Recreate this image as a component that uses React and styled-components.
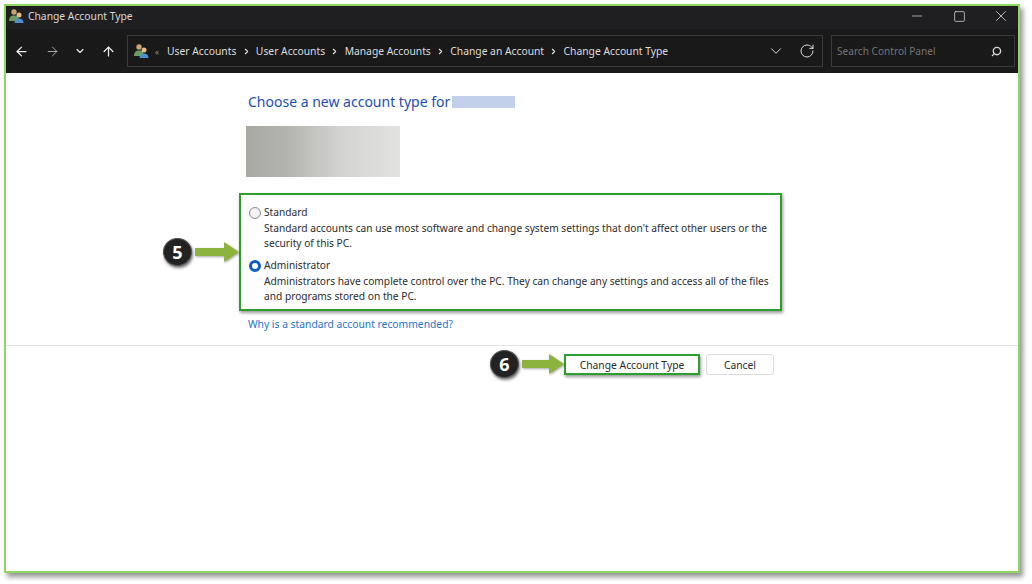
import React from 'react'
import styled, { createGlobalStyle } from 'styled-components'
import { ArrowLeft, ArrowRight, ArrowUp, ChevronDown, ChevronRight, RotateCw, Search, Minus, Square, X } from 'lucide-react'

const GlobalStyle = createGlobalStyle`
  html, body {
    margin: 0;
    padding: 0;
    background: #fff;
    font-family: "Noto Sans", "Open Sans", "Liberation Sans", sans-serif;
  }
`

const Page = styled.div`
  width: 1032px;
  height: 584px;
  padding: 4px 0 0 4px;
  box-sizing: border-box;
  overflow: hidden;
`

const Frame = styled.div`
  width: 1016px;
  height: 569px;
  box-sizing: border-box;
  border: 2px solid #90d75f;
  box-shadow: 3px 4px 5px rgba(0, 0, 0, 0.42);
  background: #fff;
  display: flex;
  flex-direction: column;
`

const TitleBar = styled.div`
  height: 20px;
  flex: none;
  background: #1f1e20;
  display: flex;
  align-items: center;
  gap: 8px;
  padding: 0 0 0 2px;
  color: #d8d8d8;
  font-size: 10.3px;
`

const TitleText = styled.span`
  margin-left: -5px;
  flex: 1;
`

const WindowButton = styled.div`
  width: 34px;
  display: flex;
  justify-content: center;
  color: #d4d4d4;
`

const NavBar = styled.div`
  height: 47px;
  flex: none;
  background: linear-gradient(#1f1e20 0, #1f1e20 3px, #1a191a 3px);
  display: flex;
  align-items: center;
  padding: 3px 0 0 0;
  box-sizing: border-box;
`

const NavButton = styled.div`
  width: ${props => props.$w}px;
  display: flex;
  justify-content: center;
  color: ${props => props.$dim ? '#b0b0b0' : '#f0f0f0'};
`

const AddressBox = styled.div`
  width: 696px;
  height: 32px;
  margin-left: 2px;
  box-sizing: border-box;
  border: 1px solid #3a3a3a;
  background: #191919;
  display: flex;
  align-items: center;
  padding-left: 5px;
  color: #dcdcdc;
  font-size: 10.3px;
`

const Crumb = styled.span`
  white-space: nowrap;
`

const CrumbSep = styled.span`
  width: 19.5px;
  display: flex;
  justify-content: center;
  color: #e0e0e0;
`

const Overflow = styled.span`
  color: #8a8a8a;
  font-size: 8px;
  margin: 0 8px 0 5px;
`

const AddressTools = styled.div`
  margin-left: auto;
  display: flex;
  align-items: center;
  gap: 14px;
  padding-right: 7px;
`

const SearchBox = styled.div`
  width: 184px;
  height: 32px;
  margin-left: 8px;
  box-sizing: border-box;
  border: 1px solid #3a3a3a;
  background: #191919;
  display: flex;
  align-items: center;
  justify-content: space-between;
  padding: 0 12px 0 5px;
  color: #747474;
  font-size: 10.1px;
`

const FlippedSearch = styled(Search)`
  transform: scaleX(-1);
  color: #d8d8d8;
`

const Content = styled.div`
  flex: 1;
  display: flex;
  flex-direction: column;
  position: relative;
`

const Main = styled.div`
  padding: 19px 0 0 242px;
  display: flex;
  flex-direction: column;
  align-items: flex-start;
`

const Heading = styled.div`
  display: flex;
  align-items: center;
  color: #1d4fb0;
  font-size: 14px;
  line-height: 20px;
`

const BlurredName = styled.span`
  width: 63px;
  height: 12px;
  margin-left: 2px;
  background: #c2d0ec;
`

const BlurredPicture = styled.div`
  width: 154px;
  height: 51px;
  margin: 14px 0 0 -2px;
  background: linear-gradient(90deg, #a8a9a3 0%, #b2b3ae 25%, #d2d3d0 60%, #e2e2e1 100%);
`

const Options = styled.div`
  width: 543px;
  height: 118px;
  margin: 16px 0 0 -9px;
  padding: 10px 0 0 8px;
  box-sizing: border-box;
  border: 2px solid #2ca02c;
  box-shadow: 1px 2px 3px rgba(0, 0, 0, 0.4);
`

const Option = styled.div`
  display: grid;
  grid-template-columns: 15px 1fr;
  font-size: 10.2px;
  line-height: 15.6px;
  color: #2b2b2b;
  margin-bottom: 6.3px;
`

const Radio = styled.span`
  width: 12px;
  height: 12px;
  margin-top: 2px;
  box-sizing: border-box;
  border-radius: 50%;
  background: ${props => props.$checked ? '#fff' : '#f2f2f2'};
  border: ${props => props.$checked ? '3.5px solid #0f5cc0' : '1px solid #8a8a8a'};
`

const OptionText = styled.div`
  grid-column: 2;
  width: 516px;
  white-space: pre-line;
`

const HelpLink = styled.a`
  margin-top: 6px;
  color: #1f74c8;
  font-size: 10.3px;
  line-height: 15px;
`

const Divider = styled.div`
  height: 1px;
  margin-top: 13px;
  background: #e2e2e2;
`

const Actions = styled.div`
  display: flex;
  gap: 6px;
  padding: 8px 0 0 558px;
`

const Button = styled.button`
  height: 21px;
  width: ${props => props.$w}px;
  box-sizing: border-box;
  padding: 0;
  background: #fff;
  color: #2b2b2b;
  font-family: inherit;
  font-size: 10.3px;
  border: ${props => props.$marked ? '2px solid #2ca02c' : '1px solid #dcdcdc'};
  border-radius: ${props => props.$marked ? '0' : '3px'};
  box-shadow: ${props => props.$marked ? '1px 2px 3px rgba(0, 0, 0, 0.4)' : 'none'};
`

const Callout = styled.div`
  position: absolute;
  left: ${props => props.$x}px;
  top: ${props => props.$y}px;
  display: flex;
  align-items: center;
  gap: 3px;
`

const Badge = styled.div`
  width: 29px;
  height: 28px;
  box-sizing: border-box;
  border-radius: 50%;
  background: #222;
  border: 1px solid #555;
  box-shadow: 1px 2px 3px rgba(0, 0, 0, 0.55);
  color: #fff;
  font-size: 18px;
  font-weight: 700;
  display: flex;
  align-items: center;
  justify-content: center;
`

const ArrowSvg = styled.svg`
  filter: drop-shadow(1px 1px 1px rgba(0, 0, 0, 0.35));
`

const UsersIcon = () => (
  <svg width="17" height="16" viewBox="0 0 17 16">
    <circle cx="6" cy="4" r="2.7" fill="#c9a66b" />
    <path d="M1 13c0-4 2-5.500 5-5.500s5 1.500 5 5.500z" fill="#6f9a63" />
    <circle cx="11" cy="7" r="2.5" fill="#e2bd8c" />
    <path d="M6.500 15c0-3 2-4.500 4.500-4.500s4.500 1.500 4.500 4.500z" fill="#4d8fd0" />
  </svg>
)

const GreenArrow = ({ width }) => (
  <ArrowSvg width={width} height="20" viewBox={`0 0 ${width} 20`}>
    <path d={`M0 6h${width - 15}V0l15 10-15 10v-6H0z`} fill="#8db33f" />
  </ArrowSvg>
)

const crumbs = ['User Accounts', 'User Accounts', 'Manage Accounts', 'Change an Account', 'Change Account Type']

export default function App() {
  return (
    <Page>
      <GlobalStyle />
      <Frame>
        <TitleBar>
          <UsersIcon />
          <TitleText>Change Account Type</TitleText>
          <WindowButton><Minus size={16} strokeWidth={1.1} /></WindowButton>
          <WindowButton><Square size={13} strokeWidth={1.4} /></WindowButton>
          <WindowButton><X size={18} strokeWidth={1.1} /></WindowButton>
        </TitleBar>
        <NavBar>
          <NavButton $w={30}><ArrowLeft size={15} strokeWidth={2} /></NavButton>
          <NavButton $w={33} $dim><ArrowRight size={15} strokeWidth={1.5} /></NavButton>
          <NavButton $w={22}><ChevronDown size={12} strokeWidth={2.2} /></NavButton>
          <NavButton $w={34}><ArrowUp size={15} strokeWidth={2} /></NavButton>
          <AddressBox>
            <UsersIcon />
            <Overflow>«</Overflow>
            {crumbs.map((crumb, i) => (
              <React.Fragment key={i}>
                {i > 0 && <CrumbSep><ChevronRight size={9} strokeWidth={3} /></CrumbSep>}
                <Crumb>{crumb}</Crumb>
              </React.Fragment>
            ))}
            <AddressTools>
              <ChevronDown size={18} strokeWidth={1.3} color="#dcdcdc" />
              <RotateCw size={16} strokeWidth={1.5} color="#dcdcdc" />
            </AddressTools>
          </AddressBox>
          <SearchBox>
            Search Control Panel
            <FlippedSearch size={11} strokeWidth={3} />
          </SearchBox>
        </NavBar>
        <Content>
          <Main>
            <Heading>Choose a new account type for<BlurredName /></Heading>
            <BlurredPicture />
            <Options>
              <Option>
                <Radio />
                <span>Standard</span>
                <OptionText>{"Standard accounts can use most software and change system settings that don't affect other users or the\nsecurity of this PC."}</OptionText>
              </Option>
              <Option>
                <Radio $checked />
                <span>Administrator</span>
                <OptionText>{"Administrators have complete control over the PC. They can change any settings and access all of the files\nand programs stored on the PC."}</OptionText>
              </Option>
            </Options>
            <HelpLink>Why is a standard account recommended?</HelpLink>
          </Main>
          <Divider />
          <Actions>
            <Button $w={136} $marked>Change Account Type</Button>
            <Button $w={68}>Cancel</Button>
          </Actions>
          <Callout $x={157} $y={165}>
            <Badge>5</Badge>
            <GreenArrow width={44} />
          </Callout>
          <Callout $x={484} $y={277}>
            <Badge>6</Badge>
            <GreenArrow width={42} />
          </Callout>
        </Content>
      </Frame>
    </Page>
  )
}
